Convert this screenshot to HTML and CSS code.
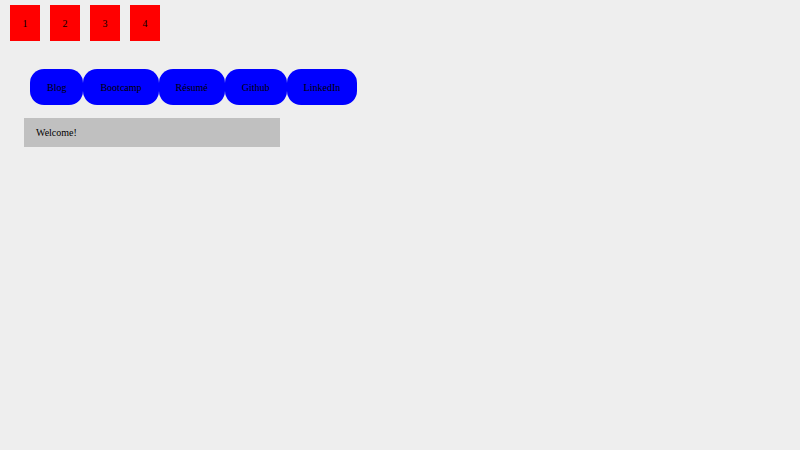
FILE: index.html
```html
<!DOCTYPE html>
<html>
<head>
<meta charset="utf-8">
<link rel="stylesheet" href="styles.css">
</head>
<body>
<div class="tiles">
  <div class="tile">1</div>
  <div class="tile">2</div>
  <div class="tile">3</div>
  <div class="tile">4</div>
</div>
<nav class="nav">
  <a class="pill">Blog</a>
  <a class="pill">Bootcamp</a>
  <a class="pill">Résumé</a>
  <a class="pill">Github</a>
  <a class="pill">LinkedIn</a>
</nav>
<div class="welcome">Welcome!</div>
</body>
</html>
```
FILE: styles.css
```css
html, body {
  margin: 0;
  padding: 0;
  background: #eeeeee;
  font-family: "Liberation Serif", "Times New Roman", serif;
  font-size: 10px;
  color: #000;
}
.tiles {
  display: flex;
  gap: 10px;
  padding: 5px 10px 0 10px;
}
.tile {
  width: 30px;
  height: 36px;
  background: #ff0000;
  display: flex;
  align-items: center;
  justify-content: center;
}
.nav {
  display: flex;
  margin: 28px 0 0 30px;
}
.pill {
  height: 36px;
  padding: 0 17px;
  background: #0000ff;
  border-radius: 14px;
  display: flex;
  align-items: center;
  justify-content: center;
}
.welcome {
  margin: 13px 0 0 24px;
  width: 244px;
  height: 29px;
  padding-left: 12px;
  background: #c0c0c0;
  display: flex;
  align-items: center;
}
```
